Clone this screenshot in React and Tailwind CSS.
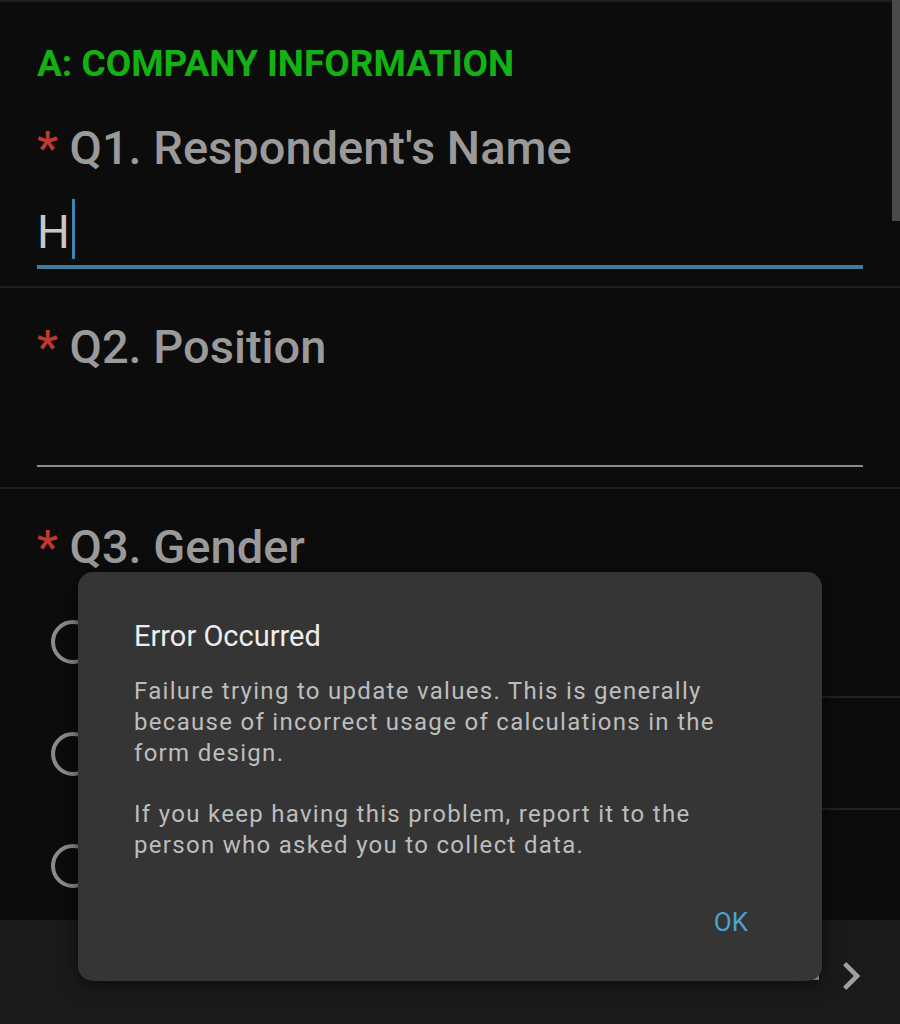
import React from "react";

function Asterisk() {
  return <span className="text-[#c0392f]">*</span>;
}

function Radio() {
  return (
    <div className="h-[112px] flex items-center">
      <div className="ml-[14px] w-[44px] h-[44px] shrink-0 rounded-full border-4 border-[#8a8a8a]" />
      <div className="ml-[24px] flex-1 h-full border-b-2 border-[#222222]" />
    </div>
  );
}

export default function App() {
  return (
    <div className="relative w-[900px] h-[1024px] overflow-hidden bg-[#0c0c0c] font-['Roboto',sans-serif] flex flex-col">
      <div className="h-[2px] bg-[#1e1e1e] shrink-0" />
      <div className="flex-1 overflow-hidden">
        <section className="px-[37px] pt-[40px] pb-[17px] border-b-2 border-[#1e1e1e]">
          <h2 className="text-[37px] leading-[44px] font-bold text-[#13b113] whitespace-nowrap">A: COMPANY INFORMATION</h2>
          <div className="mt-[35px] text-[47px] leading-[54px] font-medium text-[#9a9a9a] whitespace-nowrap">
            <Asterisk /> Q1. Respondent's Name
          </div>
          <div className="h-[94px] border-b-4 border-[#3e7c9b] flex items-end pb-[6px]">
            <span className="text-[46px] leading-[54px] text-[#c8c8c8]">H</span>
            <span className="w-[3px] h-[60px] bg-[#3a86ad] ml-[2px]" />
          </div>
        </section>
        <section className="px-[37px] pt-[32px] pb-[20px] border-b-2 border-[#1e1e1e]">
          <div className="text-[47px] leading-[54px] font-medium text-[#9a9a9a] whitespace-nowrap">
            <Asterisk /> Q2. Position
          </div>
          <div className="h-[93px] border-b-2 border-[#8c8c8c]" />
        </section>
        <section className="pt-[31px]">
          <div className="px-[37px] text-[47px] leading-[54px] font-medium text-[#9a9a9a] whitespace-nowrap">
            <Asterisk /> Q3. Gender
          </div>
          <div className="mt-[12px] pl-[37px]">
            <Radio />
            <Radio />
            <Radio />
          </div>
        </section>
      </div>
      <footer className="h-[104px] shrink-0 bg-[#1a1a1a] flex items-center justify-end pr-[21px] gap-[4px]">
        <div className="w-[10px] h-[10px] mt-[6px] bg-[#9e9e9e]" />
        <svg width="56" height="56" viewBox="0 0 24 24" className="mt-[8px]" fill="#a0a0a0">
          <path d="M10 6L8.59 7.41 13.17 12l-4.58 4.59L10 18l6-6z" />
        </svg>
      </footer>

      <div className="absolute right-0 top-0 h-[221px] w-[8px] bg-[#4a4a4a]" />

      <div className="absolute left-[78px] top-[572px] w-[744px] h-[409px] rounded-[15px] bg-[#353535] shadow-[0_4px_18px_rgba(0,0,0,0.55)] flex flex-col">
        <div className="pl-[56px] pt-[46px]">
          <div className="text-[29px] leading-[36px] text-[#ededed]">Error Occurred</div>
          <div className="mt-[22px] text-[24px] leading-[31px] text-[#bdbdbd] whitespace-nowrap tracking-[0.054em]">
            Failure trying to update values. This is generally
            <br />
            because of incorrect usage of calculations in the
            <br />
            form design.
          </div>
          <div className="mt-[30px] text-[24px] leading-[31px] text-[#bdbdbd] whitespace-nowrap tracking-[0.054em]">
            If you keep having this problem, report it to the
            <br />
            person who asked you to collect data.
          </div>
        </div>
        <div className="mt-auto flex justify-end pr-[74px] pb-[43px]">
          <button className="text-[26px] leading-[32px] text-[#4ba3d3]">OK</button>
        </div>
      </div>
    </div>
  );
}
